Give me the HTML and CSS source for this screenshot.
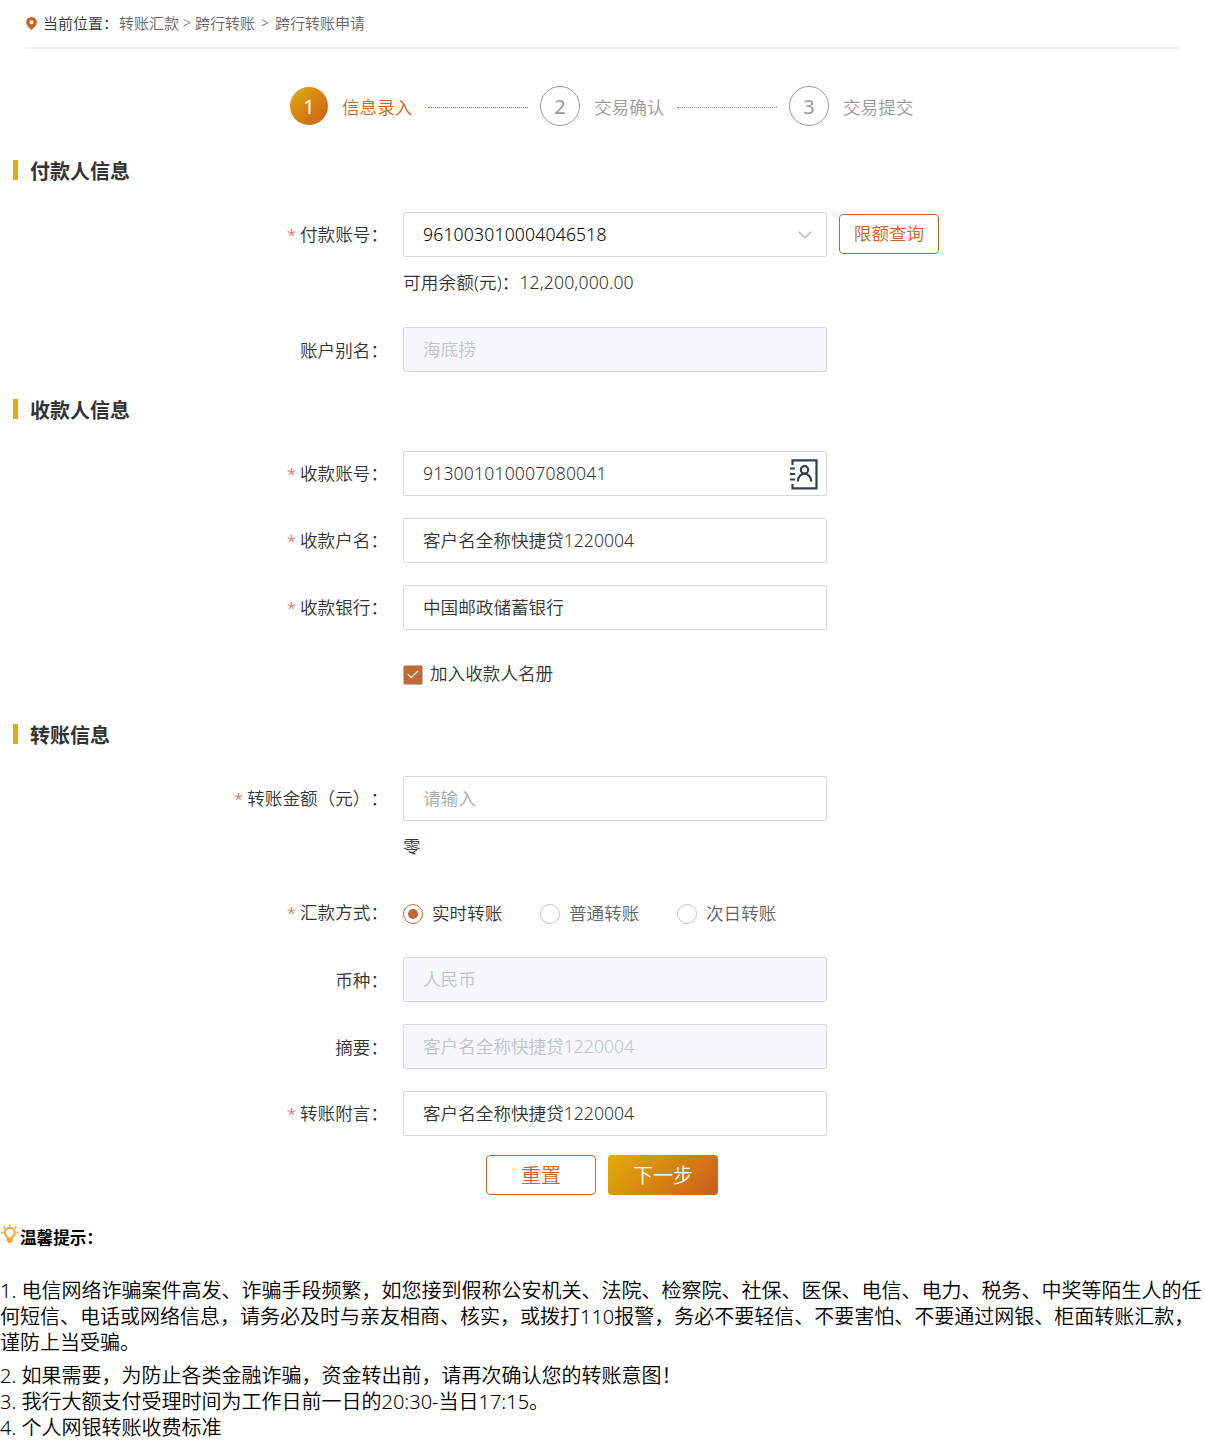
FILE: index.html
```html
<!DOCTYPE html>
<html lang="zh-CN">
<head>
<meta charset="utf-8">
<title>跨行转账申请</title>
<link rel="stylesheet" href="styles.css">
</head>
<body>
<nav class="crumbs">
  <svg class="pin" width="11" height="13" viewBox="0 0 11 13"><path fill="#cf6220" fill-rule="evenodd" d="M5.5 0A5.4 5.4 0 0 0 .1 5.3C.1 8.200 3.500 11.500 5.500 13 7.500 11.500 10.900 8.200 10.900 5.300A5.400 5.400 0 0 0 5.500 0ZM5.500 3.300a2 2 0 1 1 0 4 2 2 0 0 1 0-4Z"/></svg>
  <span class="here">当前位置：</span><span>转账汇款</span><span class="sep">&gt;</span><span>跨行转账</span><span class="sep wide">&gt;</span><span>跨行转账申请</span>
</nav>

<div class="steps">
  <span class="num active">1</span><span class="step-name active">信息录入</span>
  <span class="dots active"></span>
  <span class="num">2</span><span class="step-name">交易确认</span>
  <span class="dots"></span>
  <span class="num">3</span><span class="step-name">交易提交</span>
</div>

<form class="form">
  <h2 class="title">付款人信息</h2>
  <section class="group payer">
    <div class="row">
      <label class="label required">付款账号：</label>
      <div class="field select"><input class="input account dark" value="961003010004046518" readonly>
        <svg class="caret" width="14" height="8" viewBox="0 0 14 8"><path d="M.8.8 7 6.800 13.200.8" fill="none" stroke="#b4b7bd" stroke-width="1.200"/></svg>
      </div>
      <button type="button" class="btn query">限额查询</button>
    </div>
    <p class="hint">可用余额(元)：12,200,000.00</p>
    <div class="row">
      <label class="label">账户别名：</label>
      <div class="field"><input class="input" value="海底捞" disabled></div>
    </div>
  </section>

  <h2 class="title">收款人信息</h2>
  <section class="group payee">
    <div class="row">
      <label class="label required">收款账号：</label>
      <div class="field"><input class="input account" value="913001010007080041">
        <svg class="book" width="30" height="32" viewBox="0 0 30 32" fill="none" stroke="#343c50" stroke-width="2.200"><path d="M3.500 7V2.300h24v28h-24V26M1 10.500h5M1 16h5M1 21.500h5"/><circle cx="15.500" cy="11.800" r="3.700"/><path d="M8.800 23.500c0-4.500 3-7.800 6.700-7.800s6.700 3.300 6.700 7.800"/></svg>
      </div>
    </div>
    <div class="row">
      <label class="label required">收款户名：</label>
      <div class="field"><input class="input" value="客户名全称快捷贷1220004"></div>
    </div>
    <div class="row">
      <label class="label required">收款银行：</label>
      <div class="field"><input class="input" value="中国邮政储蓄银行"></div>
    </div>
    <div class="row">
      <span class="label"></span>
      <span class="check"><svg width="12" height="9" viewBox="0 0 12 9"><path d="M.8 4.200 4.300 7.700 11.200.8" fill="none" stroke="#fff" stroke-width="1.200"/></svg></span>
      <span class="check-name">加入收款人名册</span>
    </div>
  </section>

  <h2 class="title">转账信息</h2>
  <section class="group transfer">
    <div class="row">
      <label class="label required">转账金额（元）：</label>
      <div class="field"><input class="input" placeholder="请输入"></div>
    </div>
    <p class="hint">零</p>
    <div class="row options">
      <label class="label required">汇款方式：</label>
      <span class="option on"><i class="radio"></i>实时转账</span>
      <span class="option"><i class="radio"></i>普通转账</span>
      <span class="option"><i class="radio"></i>次日转账</span>
    </div>
    <div class="row">
      <label class="label">币种：</label>
      <div class="field"><input class="input" value="人民币" disabled></div>
    </div>
    <div class="row">
      <label class="label">摘要：</label>
      <div class="field"><input class="input" value="客户名全称快捷贷1220004" disabled></div>
    </div>
    <div class="row">
      <label class="label required">转账附言：</label>
      <div class="field"><input class="input" value="客户名全称快捷贷1220004"></div>
    </div>
  </section>

  <div class="actions">
    <button type="button" class="btn">重置</button>
    <button type="button" class="btn primary">下一步</button>
  </div>
</form>

<footer class="tips">
  <h3 class="tips-title">
    <svg width="20" height="20" viewBox="0 0 20 20" fill="none" stroke="#eeab3b" stroke-width="1.700"><path d="M9.700.3v2.300M3.400 2.700l1.500 1.600M16.200 2.700l-1.500 1.600M1 8.700h2.200M16.300 8.700h2.200"/><path stroke-width="2.200" d="M7.700 14.300c0-1.900-2.900-2.600-2.900-5.500a5 5 0 0 1 10 0c0 2.900-2.900 3.600-2.900 5.500"/><path fill="#eda52f" stroke="none" d="M6.800 13.600h6v2.700L11 19H8.500l-1.700-2.700z"/></svg>
    <span>温馨提示：</span>
  </h3>
  <p class="tip first">1. 电信网络诈骗案件高发、诈骗手段频繁，如您接到假称公安机关、法院、检察院、社保、医保、电信、电力、税务、中奖等陌生人的任<br>何短信、电话或网络信息，请务必及时与亲友相商、核实，或拨打110报警，务必不要轻信、不要害怕、不要通过网银、柜面转账汇款，<br>谨防上当受骗。</p>
  <p class="tip">2. 如果需要，为防止各类金融诈骗，资金转出前，请再次确认您的转账意图！</p>
  <p class="tip">3. 我行大额支付受理时间为工作日前一日的20:30-当日17:15。</p>
  <p class="tip">4. 个人网银转账收费标准</p>
</footer>
</body>
</html>
```
FILE: styles.css
```css
* { box-sizing: border-box; }
body {
  margin: 0;
  height: 1450px;
  overflow: hidden;
  background: #fff;
  color: #333;
  font: 350 17.6px/26px "Noto Sans", "Noto Sans CJK SC", sans-serif;
  text-spacing-trim: space-all;
}
h2, h3, p { margin: 0; }
input, button { font: inherit; letter-spacing: inherit; }

.crumbs {
  display: flex;
  align-items: center;
  height: 49px;
  margin: 0 26px 0 25px;
  padding: 0 0 2px 1px;
  border-bottom: 2px solid #eee;
  font-size: 15px;
  color: #666;
}
.pin { margin: 2px 6px 0 0; }
.here { margin-right: 1px; color: #333; }
.sep { width: 16px; text-align: center; font-size: 14px; }
.sep.wide { width: 20px; }

.steps {
  display: flex;
  align-items: center;
  height: 40px;
  margin: 37px 0 0 290px;
  color: #999;
}
.num {
  width: 40px;
  height: 40px;
  border: 1px solid #999;
  border-radius: 50%;
  font-size: 20px;
  font-weight: 400;
  line-height: 39px;
  text-align: center;
}
.num.active {
  width: 38px;
  height: 38px;
  border: 0;
  color: #fff;
  background: linear-gradient(135deg, #e2ad09, #cb5c1a);
}
.step-name { width: 70px; margin: 1px 14px 0; white-space: nowrap; }
.step-name.active { width: 71px; color: #cf6220; margin-right: 15px; }
.dots { width: 100px; margin: 2px 12px 0 -1px; border-top: 1px dotted #999; }
.dots.active { border-color: #cf6220; margin-left: 0; }

.form { padding-top: 34px; }
.title {
  height: 20px;
  margin-left: 13px;
  padding-left: 12px;
  border-left: 5px solid #e2ad09;
  font-size: 20px;
  font-weight: 700;
  line-height: 24px;
}
.group { display: flex; flex-direction: column; gap: 22px; padding: 32px 0 27px; }
.transfer { padding-bottom: 19px; }
.row { display: flex; align-items: center; height: 45px; }
.label { width: 388px; margin-right: 15px; text-align: right; white-space: nowrap; }
.required::before { content: "*"; margin-right: 4px; color: #e05a5a; font-size: 17px; }
.field { position: relative; width: 424px; height: 45px; }
.input {
  display: block;
  width: 100%;
  height: 45px;
  padding: 0 19px 2px;
  border: 1px solid #d9d9d9;
  border-radius: 2px;
  outline: 0;
  background: #fff;
  color: #333;
}
.input:disabled { background: #f5f7fa; color: #c0c4cc; }
.input::placeholder { color: #aaa; }
.account { letter-spacing: .16px; }
.dark { color: #000; }
.caret { position: absolute; right: 15px; top: 19px; }
.book { position: absolute; right: 8px; top: 7px; }
.hint { height: 26px; margin: -10px 0 9px 403px; letter-spacing: .13px; }
.payer .hint { margin-bottom: 10px; }

.check {
  display: flex;
  width: 20px;
  height: 20px;
  margin: 1px 7px 0 0;
  padding: 4px 0 0 3px;
  border: 1px solid #b8b8b8;
  border-radius: 2px;
  background: #c46932;
}
.check-name { margin-top: -3px; }
.option { display: flex; align-items: center; width: 137px; white-space: nowrap; color: #606266; }
.option.on { color: #333; }
.radio {
  display: grid;
  place-items: center;
  width: 20px;
  height: 20px;
  margin: 2px 9px 0 0;
  border: 1px solid #c4c4c4;
  border-radius: 50%;
}
.on .radio { border-color: #c46932; }
.on .radio::after { content: ""; width: 10px; height: 10px; border-radius: 50%; background: #c46932; }

.btn {
  width: 110px;
  height: 40px;
  padding: 1px 0 0;
  border: 1px solid #cf6220;
  border-radius: 4px;
  background: #fff;
  color: #cf6220;
  font-size: 20px;
}
.query { width: 100px; margin: -2px 0 0 12px; padding: 0 0 2px; font-size: 17.6px; }
.primary { border: 0; color: #fff; background: linear-gradient(135deg, #e2ad09, #cb5c1a); }
.actions { display: flex; gap: 12px; margin-left: 486px; }

.tips { padding-top: 27px; font-size: 20px; color: #000; }
.tips-title { display: flex; height: 28px; font-size: 16.6px; font-weight: 700; line-height: 32px; }
.tips-title svg { margin-top: 2px; }
.tip { white-space: nowrap; }
.tip.first { margin: 28px 0 7px; }
```
